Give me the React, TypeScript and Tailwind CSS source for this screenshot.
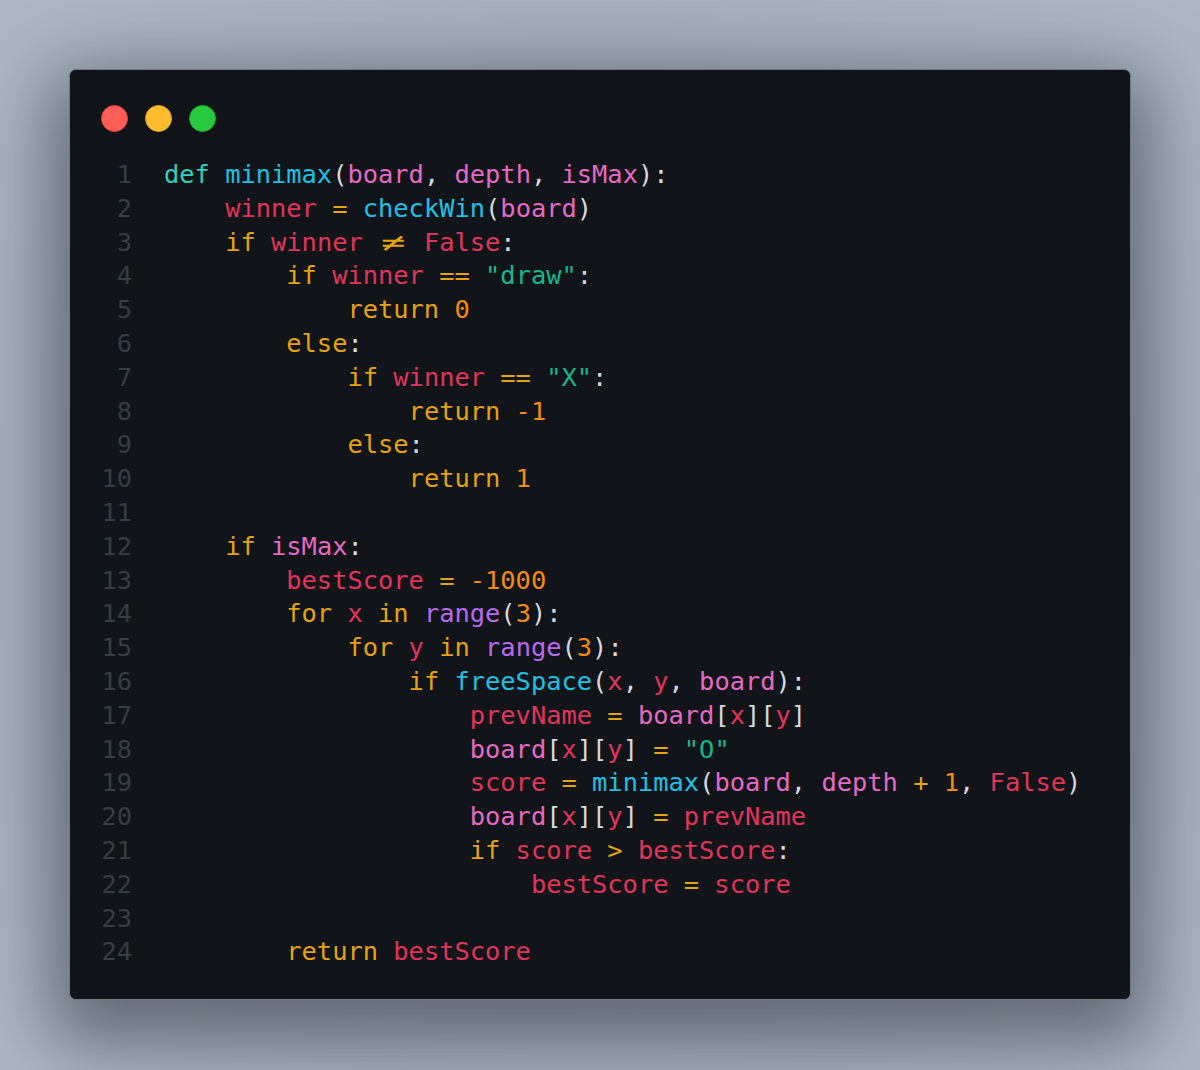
import React from 'react';

// token colours, keyed by the prefix used in the code lines below
const COLORS: Record<string, string> = {
  d: 'text-[#2fd0bd]', // def
  f: 'text-[#1ec1e4]', // function names
  a: 'text-[#e46ac3]', // params
  v: 'text-[#e1345d]', // variables
  k: 'text-[#e5a30f]', // keywords / operators
  n: 'text-[#f38a12]', // numbers
  s: 'text-[#17b58f]', // strings
  r: 'text-[#b96bef]', // builtins
  p: 'text-[#d5d8de]', // punctuation
};

const LINES: string[] = [
  'd:def| |f:minimax|p:(|a:board|p:, |a:depth|p:, |a:isMax|p:):',
  '    |v:winner| |k:=| |f:checkWin|p:(|a:board|p:)',
  '    |k:if| |v:winner| |ne| |v:False|p::',
  '        |k:if| |v:winner| |k:==| |s:"draw"|p::',
  '            |k:return| |n:0',
  '        |k:else|p::',
  '            |k:if| |v:winner| |k:==| |s:"X"|p::',
  '                |k:return| |n:-1',
  '            |k:else|p::',
  '                |k:return| |n:1',
  '',
  '    |k:if| |a:isMax|p::',
  '        |v:bestScore| |k:=| |n:-1000',
  '        |k:for| |v:x| |k:in| |r:range|p:(|n:3|p:):',
  '            |k:for| |v:y| |k:in| |r:range|p:(|n:3|p:):',
  '                |k:if| |f:freeSpace|p:(|v:x|p:, |v:y|p:, |a:board|p:):',
  '                    |v:prevName| |k:=| |a:board|p:[|v:x|p:][|v:y|p:]',
  '                    |a:board|p:[|v:x|p:][|v:y|p:]| |k:=| |s:"O"',
  '                    |v:score| |k:=| |f:minimax|p:(|a:board|p:, |a:depth| |k:+| |n:1|p:, |v:False|p:)',
  '                    |a:board|p:[|v:x|p:][|v:y|p:]| |k:=| |v:prevName',
  '                    |k:if| |v:score| |k:>| |v:bestScore|p::',
  '                        |v:bestScore| |k:=| |v:score',
  '',
  '        |k:return| |v:bestScore',
];

function Token({ raw }: { raw: string }) {
  if (raw === 'ne') {
    return (
      <span className="inline-block w-[2ch] text-center text-[#e5a30f] scale-x-[1.6]">≠</span>
    );
  }
  const i = raw.indexOf(':');
  if (i === 1 && COLORS[raw[0]]) {
    return <span className={COLORS[raw[0]]}>{raw.slice(2)}</span>;
  }
  return <span>{raw}</span>;
}

export default function App() {
  return (
    <div className="min-h-[1070px] w-full bg-[radial-gradient(ellipse_at_center,#98a3ae_0%,#a6b1bc_70%,#adb8c2_100%)] flex justify-center pt-[69px]">
      <div className="w-[1062px] h-[931px] bg-[#111419] rounded-[7px] border border-[#6f7882] shadow-[0_24px_70px_18px_rgba(40,46,54,0.55)] pl-[31px] pt-[35px]">
        {/* window buttons */}
        <div className="flex gap-[17px]">
          <div className="w-[27px] h-[27px] rounded-full bg-[#ff5f57] border border-[#e0443e]" />
          <div className="w-[27px] h-[27px] rounded-full bg-[#febc2e] border border-[#dea123]" />
          <div className="w-[27px] h-[27px] rounded-full bg-[#28c840] border border-[#1aab29]" />
        </div>

        <div className="mt-[26px] font-['DejaVu_Sans_Mono','Liberation_Mono',monospace] text-[25.4px] leading-[33.8px] whitespace-pre">
          {LINES.map((line, idx) => (
            <div key={idx} className="flex">
              <span className="w-[31px] text-right text-[#373c45]">{idx + 1}</span>
              <span className="ml-[32px] text-[#d5d8de]">
                {line === ''
                  ? ' '
                  : line.split('|').map((t, j) => <Token key={j} raw={t} />)}
              </span>
            </div>
          ))}
        </div>
      </div>
    </div>
  );
}
